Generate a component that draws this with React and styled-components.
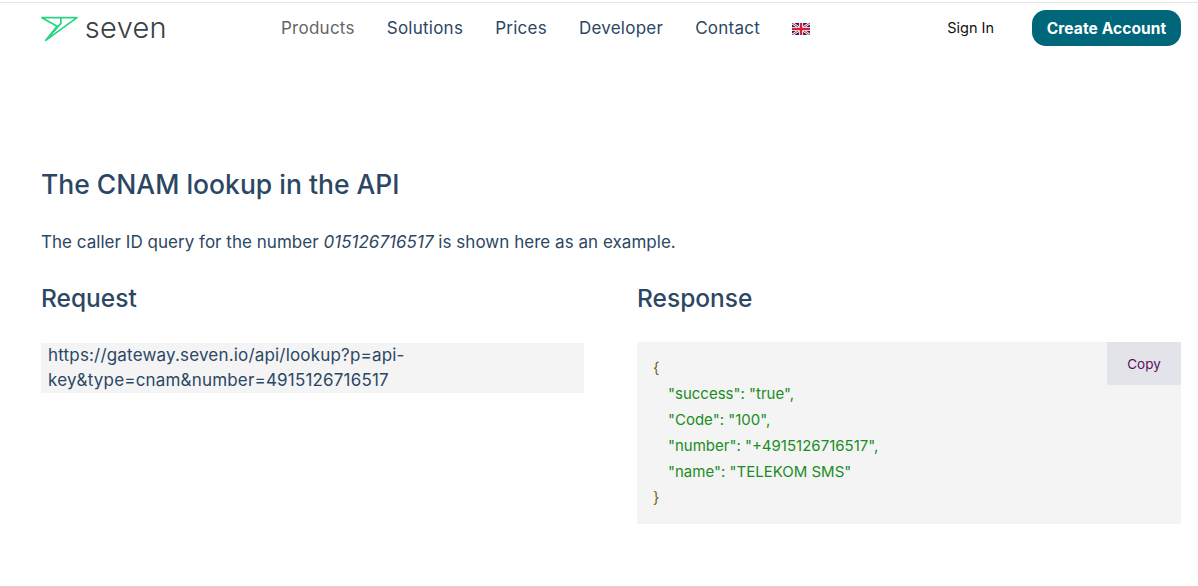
import React from "react";
import styled, { createGlobalStyle } from "styled-components";

const GlobalStyle = createGlobalStyle`
  html, body {
    margin: 0;
    background: #fff;
    font-family: Inter, "Noto Sans", sans-serif;
    color: #2b4764;
  }
`;

const Page = styled.div`
  width: 1198px;
  height: 586px;
  overflow: hidden;
  padding-top: 2px;
  box-sizing: border-box;
`;

const Header = styled.header`
  height: 52px;
  border-top: 1px solid #e4e4e4;
  padding: 7px 17px 0 41px;
  display: flex;
  align-items: flex-start;
  box-sizing: border-box;
`;

const Brand = styled.a`
  width: 126px;
  height: 36px;
  display: flex;
  align-items: center;
  gap: 6px;
  margin-top: 1px;
`;

const BrandName = styled.span`
  font-family: Inter, sans-serif;
  font-size: 29px;
  font-weight: 300;
  letter-spacing: 0.3px;
  color: #3a3f44;
  line-height: 1;
  margin-top: -3px;
`;

const Nav = styled.nav`
  display: flex;
  align-items: center;
  gap: 32px;
  height: 36px;
  margin-left: 114px;
`;

const NavLink = styled.a`
  font-size: 17px;
  letter-spacing: 0.25px;
  color: ${(p) => (p.$active ? "#666" : "#2b4764")};
`;

const Flag = styled.svg`
  width: 18px;
  height: 12px;
  display: block;
  margin-top: 2px;
`;

const Actions = styled.div`
  margin-left: auto;
  display: flex;
  align-items: center;
  gap: 38px;
`;

const SignIn = styled.a`
  font-size: 14.5px;
  color: #111;
  margin-top: -1px;
`;

const CreateButton = styled.a`
  width: 149px;
  height: 36px;
  border-radius: 14px;
  background: #00667a;
  color: #fff;
  font-size: 15.5px;
  letter-spacing: 0.1px;
  font-weight: 700;
  display: flex;
  align-items: center;
  justify-content: center;
`;

const Main = styled.main`
  padding: 112px 17px 0 41px;
`;

const Title = styled.h1`
  margin: 0;
  font-size: 26.5px;
  line-height: 36px;
  font-weight: 500;
  color: #2b4764;
`;

const Intro = styled.p`
  margin: 28px 0 0;
  font-size: 17px;
  letter-spacing: 0.03px;
  line-height: 24px;
  color: #2b4764;
`;

const Columns = styled.div`
  margin-top: 28px;
  display: grid;
  grid-template-columns: 543px 544px;
  column-gap: 53px;
`;

const Column = styled.section`
  display: flex;
  flex-direction: column;
`;

const Heading = styled.h2`
  margin: 0 0 28px;
  font-size: 24.5px;
  line-height: 32px;
  font-weight: 500;
  color: #2b4764;
`;

const RequestCode = styled.div`
  background: #f4f4f4;
  padding: 0 7px;
  font-size: 17px;
  letter-spacing: 0.18px;
  line-height: 25px;
  color: #2b4764;
  margin-top: 1px;
`;

const ResponseBox = styled.div`
  position: relative;
  background: #f4f4f4;
  height: 182px;
  box-sizing: border-box;
  padding: 13px 16px;
  font-size: 15px;
  line-height: 26px;
`;

const CopyButton = styled.button`
  position: absolute;
  top: 0;
  right: 0;
  width: 74px;
  height: 43px;
  border: 0;
  background: #e3e3ea;
  color: #5c0f5c;
  font-family: inherit;
  font-size: 13.5px;
`;

const Line = styled.div`
  padding-left: ${(p) => (p.$indent ? "15px" : "0")};
  color: ${(p) => (p.$brace ? "#666b10" : "#1a8c24")};
  white-space: pre;
`;

function Logo() {
  return (
    <svg width="40" height="28" viewBox="0 0 40 28" fill="none">
      <path
        d="M1 2 H38 L5 26 L17 11 L1 2 M21 2.5 L21 8 L5 26"
        stroke="#27d483"
        strokeWidth="1.8"
        strokeLinejoin="round"
        strokeLinecap="round"
      />
    </svg>
  );
}

function UkFlag() {
  return (
    <Flag viewBox="0 0 18 12">
      <rect width="18" height="12" fill="#1f1f66" />
      <path d="M0 0 L18 12 M18 0 L0 12" stroke="#fff" strokeWidth="2.6" />
      <path d="M0 0 L18 12 M18 0 L0 12" stroke="#cf2339" strokeWidth="1" />
      <path d="M9 0 V12 M0 6 H18" stroke="#fff" strokeWidth="4.2" />
      <path d="M9 0 V12 M0 6 H18" stroke="#cf2339" strokeWidth="2.4" />
    </Flag>
  );
}

export default function App() {
  return (
    <Page>
      <GlobalStyle />
      <Header>
        <Brand>
          <Logo />
          <BrandName>seven</BrandName>
        </Brand>
        <Nav>
          <NavLink $active>Products</NavLink>
          <NavLink>Solutions</NavLink>
          <NavLink>Prices</NavLink>
          <NavLink>Developer</NavLink>
          <NavLink>Contact</NavLink>
          <UkFlag />
        </Nav>
        <Actions>
          <SignIn>Sign In</SignIn>
          <CreateButton>Create Account</CreateButton>
        </Actions>
      </Header>
      <Main>
        <Title>The CNAM lookup in the API</Title>
        <Intro>
          The caller ID query for the number <em>015126716517</em> is shown here as an example.
        </Intro>
        <Columns>
          <Column>
            <Heading>Request</Heading>
            <RequestCode>
              https://gateway.seven.io/api/lookup?p=api-
              <br />
              key&amp;type=cnam&amp;number=4915126716517
            </RequestCode>
          </Column>
          <Column>
            <Heading>Response</Heading>
            <ResponseBox>
              <CopyButton>Copy</CopyButton>
              <Line $brace>{"{"}</Line>
              <Line $indent>"success": "true",</Line>
              <Line $indent>"Code": "100",</Line>
              <Line $indent>"number": "+4915126716517",</Line>
              <Line $indent>"name": "TELEKOM SMS"</Line>
              <Line $brace>{"}"}</Line>
            </ResponseBox>
          </Column>
        </Columns>
      </Main>
    </Page>
  );
}
